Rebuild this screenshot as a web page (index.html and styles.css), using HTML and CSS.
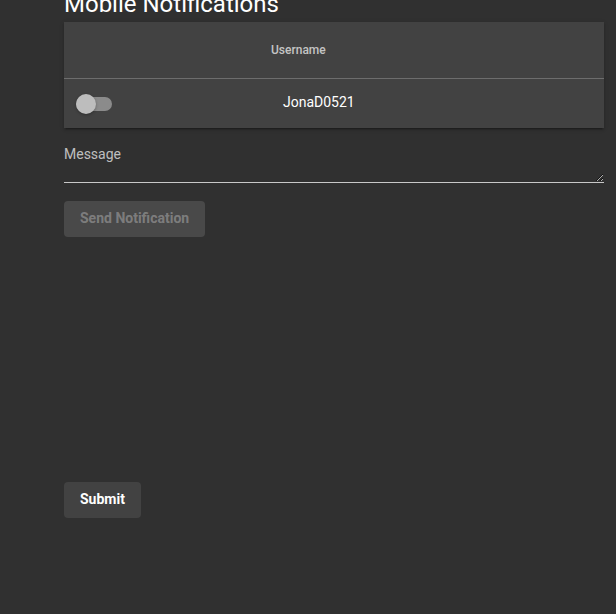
FILE: index.html
```html
<!DOCTYPE html>
<html lang="en">
<head>
    <meta charset="UTF-8">
    <meta name="viewport" content="width=device-width, initial-scale=1.0">
    <title>Mobile Notifications</title>
    <link rel="stylesheet" href="styles.css">
</head>
<body>
    <div class="container">
        <h2>Mobile Notifications</h2>

        <table class="users">
            <thead>
                <tr>
                    <th class="select-col"></th>
                    <th class="name-col">Username</th>
                </tr>
            </thead>
            <tbody>
                <tr>
                    <td class="select-col">
                        <label class="toggle">
                            <input type="checkbox">
                            <span class="track"></span>
                            <span class="thumb"></span>
                        </label>
                    </td>
                    <td class="name-col">JonaD0521</td>
                </tr>
            </tbody>
        </table>

        <div class="field">
            <label for="message">Message</label>
            <textarea id="message" rows="1"></textarea>
        </div>

        <button class="btn" disabled>Send Notification</button>

        <div class="actions">
            <button class="btn submit">Submit</button>
        </div>
    </div>
</body>
</html>
```

FILE: styles.css
```css
body {
    font-family: Roboto, "Helvetica Neue", sans-serif;
    margin: 0;
    padding: 0;
    background-color: #303030;
    color: white;
    height: 614px;
    overflow: hidden;
}
.container {
    width: 540px;
    margin-left: 64px;
}
h2 {
    font-size: 24px;
    font-weight: 400;
    line-height: 32px;
    margin: -12px 0 2px;
}
.users {
    width: 100%;
    border-collapse: collapse;
    background-color: #424242;
    box-shadow: 0 3px 1px -2px rgba(0, 0, 0, 0.2), 0 2px 2px 0 rgba(0, 0, 0, 0.14), 0 1px 5px 0 rgba(0, 0, 0, 0.12);
}
.users th {
    height: 56px;
    padding: 0;
    font-size: 12px;
    font-weight: 500;
    color: rgba(255, 255, 255, 0.7);
    text-align: left;
    border-bottom: 1px solid rgba(255, 255, 255, 0.12);
}
.users td {
    height: 49px;
    padding: 0;
    font-size: 14px;
    text-align: left;
}
.users .select-col {
    width: 195px;
    padding-left: 12px;
}
.users th.name-col {
    padding-left: 0;
}
.users td.name-col {
    height: 46px;
    padding-left: 12px;
    padding-bottom: 3px;
}
.toggle {
    position: relative;
    display: inline-block;
    width: 36px;
    height: 20px;
    vertical-align: middle;
}
.toggle input {
    display: none;
}
.toggle .track {
    position: absolute;
    left: 0;
    top: 3px;
    width: 36px;
    height: 14px;
    border-radius: 7px;
    background-color: #8b8b8b;
}
.toggle .thumb {
    position: absolute;
    left: 0;
    top: 0;
    width: 20px;
    height: 20px;
    border-radius: 50%;
    background-color: #bdbdbd;
    box-shadow: 0 1px 3px rgba(0, 0, 0, 0.3);
}
.field {
    margin-top: 18px;
    display: flex;
    flex-direction: column;
}
.field label {
    font-size: 14px;
    color: rgba(255, 255, 255, 0.7);
    line-height: 16px;
}
.field textarea {
    background: transparent;
    border: none;
    border-bottom: 1px solid #c8c8c8;
    color: white;
    font-family: inherit;
    font-size: 14px;
    height: 18px;
    padding: 0;
    margin-top: 2px;
    outline: none;
}
.btn {
    font-family: inherit;
    font-size: 14px;
    font-weight: 700;
    height: 36px;
    padding: 0 16px 2px;
    border: none;
    border-radius: 4px;
    background-color: rgba(255, 255, 255, 0.12);
    color: rgba(255, 255, 255, 0.3);
    margin-top: 18px;
    display: block;
}
.actions {
    margin-top: 245px;
}
.btn.submit {
    margin-top: 0;
    background-color: #424242;
    color: white;
    cursor: pointer;
}
```
